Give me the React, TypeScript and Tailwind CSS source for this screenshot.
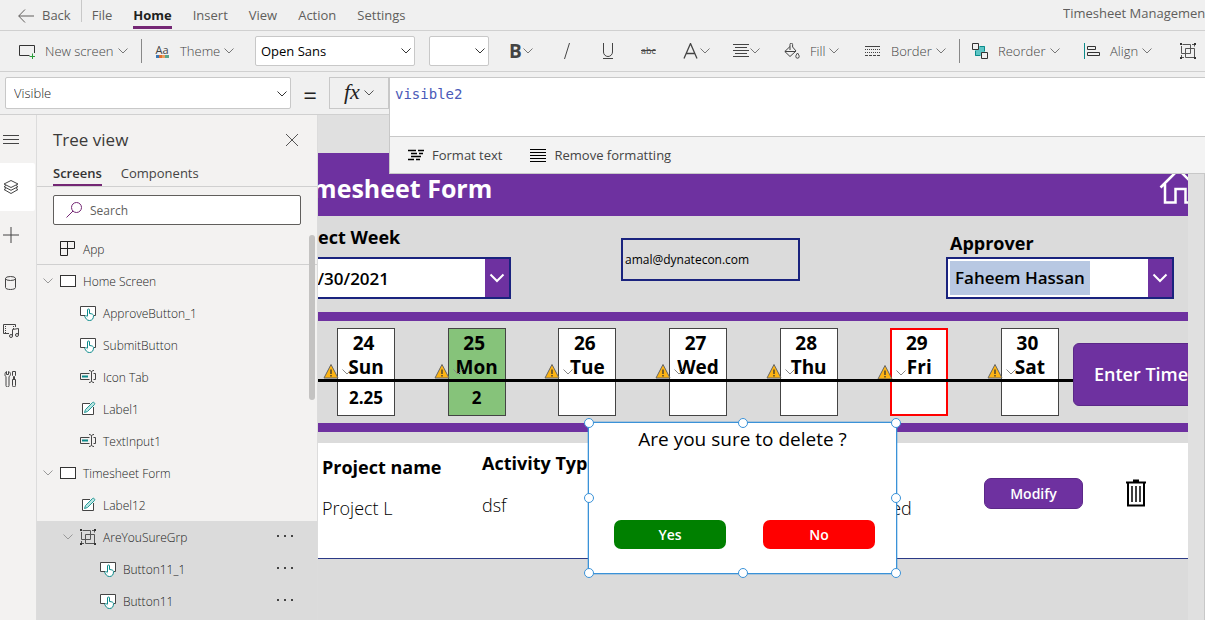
import { ReactNode, useState } from "react";
import clsx from "clsx";

interface TreeItem {
  name: string;
  icon: "screen" | "button" | "input" | "label" | "group";
  level: number;
  open?: boolean;
  selected?: boolean;
}

interface Day {
  date: string;
  name: string;
  hours: string;
  tone?: "green" | "red";
}

const menuTabs = ["File", "Home", "Insert", "View", "Action", "Settings"];

const treeItems: TreeItem[] = [
  { name: "Home Screen", icon: "screen", level: 0, open: true },
  { name: "ApproveButton_1", icon: "button", level: 1 },
  { name: "SubmitButton", icon: "button", level: 1 },
  { name: "Icon Tab", icon: "input", level: 1 },
  { name: "Label1", icon: "label", level: 1 },
  { name: "TextInput1", icon: "input", level: 1 },
  { name: "Timesheet Form", icon: "screen", level: 0, open: true },
  { name: "Label12", icon: "label", level: 1 },
  { name: "AreYouSureGrp", icon: "group", level: 1, open: true, selected: true },
  { name: "Button11_1", icon: "button", level: 2, selected: true },
  { name: "Button11", icon: "button", level: 2, selected: true },
];

const days: Day[] = [
  { date: "24", name: "Sun", hours: "2.25" },
  { date: "25", name: "Mon", hours: "2", tone: "green" },
  { date: "26", name: "Tue", hours: "" },
  { date: "27", name: "Wed", hours: "" },
  { date: "28", name: "Thu", hours: "" },
  { date: "29", name: "Fri", hours: "", tone: "red" },
  { date: "30", name: "Sat", hours: "" },
];

const handles = [
  "left-0 top-0",
  "left-1/2 top-0",
  "left-full top-0",
  "left-0 top-1/2",
  "left-full top-1/2",
  "left-0 top-full",
  "left-1/2 top-full",
  "left-full top-full",
];

function Svg({ children, className = "" }: { children: ReactNode; className?: string }) {
  return (
    <svg
      viewBox="0 0 16 16"
      fill="none"
      stroke="currentColor"
      strokeWidth="1"
      aria-hidden="true"
      className={clsx("size-4 shrink-0", className)}
    >
      {children}
    </svg>
  );
}

function Chevron({ className = "text-[#777]" }: { className?: string }) {
  return (
    <svg
      viewBox="0 0 10 6"
      fill="none"
      stroke="currentColor"
      aria-hidden="true"
      className={clsx("h-[6px] w-[10px] shrink-0", className)}
    >
      <path d="M0.5 0.5 5 5 9.5 0.5" />
    </svg>
  );
}

function GroupIcon() {
  return (
    <Svg className="text-[#555]">
      <path d="M2.5 1.5H10.5V10.5H1.5V3M5.5 5.5H14.5V14.5H5.5ZM12 1.5H14.5V3.5M1.5 12V14.5H4" />
      <path d="M0 0h2v2H0zM14 0h2v2h-2zM0 14h2v2H0zM14 14h2v2h-2z" fill="#333" stroke="none" />
    </Svg>
  );
}

function TreeIcon({ icon }: { icon: TreeItem["icon"] }) {
  switch (icon) {
    case "screen":
      return (
        <Svg className="text-[#333]">
          <rect x="0.5" y="2.5" width="15" height="11" fill="#fff" />
        </Svg>
      );
    case "button":
      return (
        <Svg className="text-[#444]">
          <path d="M5 10.5H0.5V1.5H15.5V10.5H14" fill="#fff" />
          <path
            d="M7.500 11V5a1 1 0 0 1 2 0V8.500c2.500.2 4 .8 4 2.200 0 3-1.300 4.800-4 4.800-2.800 0-3.500-2-4.800-4 .6-1.200 1.700-1 2.800.3"
            fill="#fff"
            stroke="#0b8a8a"
          />
        </Svg>
      );
    case "input":
      return (
        <Svg className="text-[#444]">
          <path d="M9.500 4.500H0.500V10.500H9.500M13.500 4.500H15.500V10.500H13.500" />
          <path d="M9 1.500C10.500 1.500 11.500 2 11.500 3.500V11.500C11.500 13 10.500 13.500 9 13.500M14 1.500C12.500 1.500 11.500 2 11.500 3.500V11.500C11.500 13 12.500 13.500 14 13.500" />
          <path d="M2 6.500h6v2H2z" fill="#0b8a8a" stroke="none" />
        </Svg>
      );
    case "label":
      return (
        <Svg className="text-[#444]">
          <path d="M10 2.500H2.500V13.500H13.500V6" fill="#fff" />
          <path d="M4.500 11.500 5.500 8.500 12.500 1.500C13.500.5 15.500 2.300 14.500 3.500L7.500 10.500Z" fill="#b8e4e2" stroke="#259a97" />
        </Svg>
      );
    case "group":
      return <GroupIcon />;
  }
}

function ToolButton({
  icon,
  label,
  text,
  className,
}: {
  icon: ReactNode;
  label: string;
  text?: string;
  className: string;
}) {
  return (
    <button aria-label={label} className={clsx("flex h-8 shrink-0 items-center", className)}>
      {icon}
      {text && <span className="ml-2.5 pt-0.5 whitespace-nowrap">{text}</span>}
      <Chevron className={clsx("text-[#777]", text ? "ml-1" : "ml-px")} />
    </button>
  );
}

function MenuBar() {
  return (
    <header className="flex h-[31px] shrink-0 items-center border-b border-[#d0d0d0] bg-[#f0f0f0] text-[13px] text-[#605e5c]">
      <button className="flex items-center pt-px pr-2.5 pl-[18px]">
        <Svg className="mr-2">
          <path d="M16 8H0.800M7 1.500.7 8 7 14.500" />
        </Svg>
        Back
      </button>
      <span className="mb-2 h-[22px] w-px bg-[#c8c8c8]" />
      <nav className="flex gap-[21px] pl-2.5">
        {menuTabs.map((tab) => (
          <button
            key={tab}
            className={clsx(
              "border-b-3 pt-[3px] leading-[22px]",
              tab === "Home" ? "border-[#742774] font-bold text-[#201f1e]" : "border-transparent"
            )}
          >
            {tab}
          </button>
        ))}
      </nav>
      <span className="mb-0.5 ml-auto w-[142px] overflow-hidden whitespace-nowrap">Timesheet Management</span>
    </header>
  );
}

function Toolbar() {
  return (
    <div className="flex h-[41px] shrink-0 items-center overflow-hidden border-b border-[#d0d0d0] bg-[#f0f0f0] pl-[19px] text-[13px] font-light text-[#444]">
      <ToolButton
        label="New screen"
        text="New screen"
        className="w-[122px]"
        icon={
          <Svg className="text-[#333]">
            <path d="M10.500 12.500H0.500V2.500H15.500V10" />
            <path d="M13.500 10.500v6M10.500 13.500h6" stroke="#2a9d3a" />
          </Svg>
        }
      />
      <span className="h-6 w-px bg-[#888]" />
      <ToolButton
        label="Theme"
        text="Theme"
        className="ml-3 w-[101px]"
        icon={
          <span className="flex w-4 flex-col items-center">
            <span className="text-[11px] leading-[9px] font-normal">Aa</span>
            <span className="mt-px flex">
              <i className="h-[3px] w-[3px] bg-[#3b78b5]" />
              <i className="h-[3px] w-[3px] bg-[#e07030]" />
              <i className="h-[3px] w-[3px] bg-[#e8a060]" />
              <i className="h-[3px] w-[4px] bg-[#5aa58c]" />
            </span>
          </span>
        }
      />
      <div className="relative">
        <select
          aria-label="Font"
          className="block h-[30px] w-[160px] appearance-none rounded-[2px] border border-[#c8c8c8] bg-white px-[5px] pt-0.5 text-[13px] font-normal text-black"
        >
          <option>Open Sans</option>
        </select>
        <Chevron className="pointer-events-none absolute top-3 right-1 text-[#333]" />
      </div>
      <div className="relative ml-3.5">
        <select
          aria-label="Font size"
          className="block h-[30px] w-[60px] appearance-none rounded-[2px] border border-[#c8c8c8] bg-white"
        >
          <option></option>
        </select>
        <Chevron className="pointer-events-none absolute top-3 right-1 text-[#333]" />
      </div>
      <ToolButton
        label="Font weight"
        className="ml-5 w-[51px]"
        icon={<span className="w-[13px] text-[19px] font-bold">B</span>}
      />
      <button aria-label="Italic" className="w-[28px]">
        <Svg className="text-[#444]">
          <path d="M9.500 0 4.500 16" />
        </Svg>
      </button>
      <button aria-label="Underline" className="ml-3 w-[41px]">
        <Svg className="text-[#444]">
          <path d="M3.500 0V9a4.500 4.500 0 0 0 9 0V0M3 15.500H13" />
        </Svg>
      </button>
      <button aria-label="Strikethrough" className="w-[42px] text-left text-[9px] font-normal line-through">
        abc
      </button>
      <ToolButton
        label="Font color"
        className="w-[50px]"
        icon={
          <Svg className="text-[#444]">
            <path d="M1 15.500 7.500.5 14 15.500M3.500 10.500h8.500" strokeWidth="1.300" />
          </Svg>
        }
      />
      <ToolButton
        label="Text alignment"
        className="w-[51px]"
        icon={
          <Svg className="text-[#444]">
            <path d="M0 1.500h16M2 4.500h12M0 7.500h16M2 10.500h12M0 13.500h16" />
          </Svg>
        }
      />
      <ToolButton
        label="Fill"
        text="Fill"
        className="w-[81px]"
        icon={
          <Svg className="text-[#444]">
            <path d="M6 7V1.500a1.300 1.300 0 0 1 2.600 0V4L12 8 6 13.500.800 8.500 6 3.500M1 8.500H11.500M13.500 10c1 1.500 1.700 2.500 1.700 3.500a1.700 1.700 0 0 1-3.400 0c0-1 .7-2 1.700-3.500Z" />
          </Svg>
        }
      />
      <ToolButton
        label="Border"
        text="Border"
        className="w-[94px]"
        icon={
          <Svg className="text-[#444]">
            <path d="M0 3.500h15" />
            <path d="M0 6.500h15M0 9.500h15" strokeDasharray="1 1" />
            <path d="M0 12.500h15" strokeDasharray="3 1" />
          </Svg>
        }
      />
      <span className="h-6 w-px bg-[#888]" />
      <ToolButton
        label="Reorder"
        text="Reorder"
        className="ml-3 w-[112px]"
        icon={
          <Svg className="text-[#333]">
            <path d="M3 3h10v10H3z" fill="#5cc5c5" stroke="none" />
            <path d="M8 3.500h4.500V8M3.500 8v4.500H8" stroke="#0b8a8a" />
            <path d="M.5.5h6v6h-6zM9.500 9.500h6v6h-6z" fill="#f0f0f0" />
          </Svg>
        }
      />
      <ToolButton
        label="Align"
        text="Align"
        className="w-[96px]"
        icon={
          <Svg className="text-[#333]">
            <path d="M.5 0v16" stroke="#0b8a8a" />
            <path d="M3.500 3.500h8v3h-8zM3.500 9.500h12v3h-12z" />
          </Svg>
        }
      />
      <button aria-label="Group">
        <GroupIcon />
      </button>
    </div>
  );
}

function FormulaBar() {
  const [formula, setFormula] = useState("visible2");

  return (
    <div className="relative z-20 flex h-[43px] shrink-0 items-center border-b border-[#d0d0d0] bg-[#f0f0f0] pl-[5px]">
      <div className="relative">
        <select
          aria-label="Property"
          className="block h-8 w-[286px] appearance-none rounded-[2px] border border-[#c8c8c8] bg-white px-2 pt-0.5 text-[13px] font-light text-[#222]"
        >
          <option>Visible</option>
        </select>
        <Chevron className="pointer-events-none absolute top-3.5 right-1 text-[#333]" />
      </div>
      <span className="mt-1 w-[38px] text-center text-[24px] text-[#222]">=</span>
      <button
        aria-label="Insert function"
        className="flex h-8 w-[60px] items-center border border-[#c8c8c8] pl-3.5 text-[#222]"
      >
        <span className="mr-1 pb-1 font-['Liberation_Serif',serif] text-[22px] italic">fx</span>
        <Chevron className="text-[#555]" />
      </button>

      {/* expanded editor hangs over the canvas */}
      <div className="absolute top-[5px] right-0 left-[389px] border border-r-0 border-[#c8c8c8] bg-[#f3f3f3]">
        <textarea
          aria-label="Formula"
          value={formula}
          onChange={(e) => setFormula(e.target.value)}
          spellCheck={false}
          className="block h-[58px] w-full resize-none bg-white px-[5px] py-1.5 font-['DejaVu_Sans_Mono',monospace] text-[14px] leading-5 text-[#4a5ab8] outline-none"
        />
        <div className="flex h-[37px] items-center gap-7 border-t border-[#c8c8c8] pt-0.5 pl-[18px] text-[13px] text-[#444]">
          <button className="flex items-center gap-2">
            <Svg className="text-black">
              <path d="M0 2.500h8M10 2.500h6M3 5.500h6M11 5.500h4M3 8.500h10M0 11.500h6M8 11.500h4" strokeWidth="1.300" />
            </Svg>
            Format text
          </button>
          <button className="flex items-center gap-2">
            <Svg className="text-black">
              <path d="M0 1.500h16M0 4.500h16M0 7.500h16M0 10.500h16M0 13.500h16" />
            </Svg>
            Remove formatting
          </button>
        </div>
      </div>
    </div>
  );
}

function Rail() {
  const item = "flex h-12 w-[35px] items-center pl-[3px] text-[#444]";

  return (
    <nav className="w-[37px] shrink-0 border-r border-[#dcdcdc] bg-[#f3f2f1]">
      <button aria-label="Menu" className={item}>
        <Svg>
          <path d="M0 4.500h16M0 8.500h16M0 12.500h16" />
        </Svg>
      </button>
      <button aria-label="Tree view" className={clsx(item, "rounded-r-[2px] bg-white")}>
        <Svg>
          <path d="M8 1.500 15 5 8 8.500 1 5ZM3 6.500 1 7.700 8 11.300 15 7.700 13 6.500M3 9.500 1 10.500 8 14.500 15 10.500 13 9.500" />
        </Svg>
      </button>
      <button aria-label="Insert" className={item}>
        <Svg>
          <path d="M8 0v16M0 8h16" />
        </Svg>
      </button>
      <button aria-label="Data" className={item}>
        <Svg>
          <ellipse cx="7.500" cy="3.500" rx="5" ry="2" />
          <path d="M2.500 3.500V12.500c0 1.200 2.200 2 5 2s5-.8 5-2V3.500" />
        </Svg>
      </button>
      <button aria-label="Media" className={item}>
        <Svg>
          <path d="M6 10.500H.5V1.500H12.500V4" />
          <path d="M2.500 3v7M10.500 3v3" strokeDasharray="1 1" />
          <path d="M9.500 13V6.500l6-1V12" />
          <circle cx="8" cy="13" r="1.500" />
          <circle cx="14" cy="12" r="1.500" />
        </Svg>
      </button>
      <button aria-label="Advanced tools" className={item}>
        <Svg>
          <path d="M3.500 0.500V3.500h2V.5C7 1 7.500 2 7.500 3.500 7.500 4.500 7 5 6 5.500V14.500a1.500 1.500 0 0 1-3 0V5.500C2 5 2 4.500 2 3.500 2 2 2.500 1 3.500.5ZM9.500.5h3v4l-1 1v3h-1v-3l-1-1ZM9.500 8.500h3v6a1.500 1.500 0 0 1-3 0Z" />
        </Svg>
      </button>
    </nav>
  );
}

function TreeRow({ item }: { item: TreeItem }) {
  return (
    <li
      className={clsx(
        "flex h-8 shrink-0 items-center pr-6 text-[12px] font-light text-[#222]",
        item.selected && "bg-[#dbdbdb]",
        item.level === 0 && "pl-1.5",
        item.level === 1 && "pl-[26px]",
        item.level === 2 && "pl-[46px]"
      )}
    >
      <span className="w-[17px]">{item.open && <Chevron className="text-[#999]" />}</span>
      <TreeIcon icon={item.icon} />
      <span className="ml-[7px] pt-0.5">{item.name}</span>
      {item.selected && (
        <button aria-label={`More actions for ${item.name}`} className="ml-auto">
          <Svg>
            <path d="M0 6h2v2H0zM7 6h2v2H7zM14 6h2v2h-2z" fill="#444" stroke="none" />
          </Svg>
        </button>
      )}
    </li>
  );
}

function TreeView() {
  return (
    <aside className="relative flex w-[281px] shrink-0 flex-col border-r border-[#dcdcdc] bg-[#f3f2f1]">
      <div className="flex h-12 shrink-0 items-center justify-between pt-0.5 pr-[17px] pl-4">
        <h2 className="text-[17px] font-medium text-[#3b3a39]">Tree view</h2>
        <button aria-label="Close" className="text-[#555]">
          <Svg>
            <path d="M2 2 14 14M14 2 2 14" />
          </Svg>
        </button>
      </div>
      <div className="flex h-6 shrink-0 items-end gap-[19px] border-b border-[#d0d0d0] pl-4 text-[13px] leading-[21px] text-[#444]">
        <button className="border-b-2 border-[#742774] font-semibold text-[#333]">Screens</button>
        <button className="border-b-2 border-transparent">Components</button>
      </div>
      <label className="mx-4 mt-2 flex h-[30px] shrink-0 items-center rounded-[2px] border border-[#605e5c] bg-white pl-3">
        <Svg className="text-[#742774]">
          <circle cx="10.500" cy="5.500" r="5" />
          <path d="M7 9 .5 15.500" />
        </Svg>
        <input
          type="text"
          aria-label="Search"
          placeholder="Search"
          className="ml-2 min-w-0 flex-1 pt-0.5 text-[12px] outline-none placeholder:text-[#605e5c]"
        />
      </label>
      <div className="mt-2 flex h-8 shrink-0 items-center border-b border-[#d0d0d0] pl-[23px] text-[12px] font-light text-[#222]">
        <Svg className="text-[#222]">
          <path d="M.5.5h14v7H.5zM7.500.5v14H.5v-14" />
        </Svg>
        <span className="ml-[7px] pt-0.5">App</span>
      </div>
      <ul className="flex min-h-0 flex-1 flex-col">
        {treeItems.map((item) => (
          <TreeRow key={item.name} item={item} />
        ))}
        <li aria-hidden="true" className="flex-1 bg-[#dbdbdb]" />
      </ul>
      <div className="absolute top-[120px] right-0.5 h-[165px] w-[6px] rounded-full bg-[#c4c3c2]" />
    </aside>
  );
}

function DayBox({ day }: { day: Day }) {
  return (
    <div
      className={clsx(
        "relative h-[88px] w-[58px] text-center text-[19px] leading-6 font-bold text-black",
        day.tone === "green" && "border border-[#444] bg-[#86c37a]",
        day.tone === "red" && "border-2 border-[#ff0000] bg-white",
        !day.tone && "border border-[#444] bg-white"
      )}
    >
      <p className={clsx("h-[51px]", day.tone === "red" ? "pt-px" : "pt-0.5")}>
        <span className="whitespace-pre">{day.date + " "}</span>
        <br />
        {day.name}
      </p>
      <p className="pt-1.5 text-[17px]">{day.hours}</p>
      <Chevron className="absolute top-10 left-1 text-[#888]" />
      <svg viewBox="0 0 16 16" className="absolute top-[34px] -left-[15px] size-4" aria-hidden="true">
        <path d="M8 1.500 15 15H1Z" fill="#fdb414" stroke="#666" />
        <path d="M8 6.500v4.500M8 12v1.500" stroke="#333" strokeWidth="1.300" />
      </svg>
    </div>
  );
}

function DeleteDialog() {
  return (
    <div
      role="dialog"
      aria-label="Are you sure to delete ?"
      className="absolute top-[269px] left-[270px] flex h-[152px] w-[309px] flex-col justify-between border border-[#3a92d8] bg-white px-[25px] pt-1 pb-6 text-black ring-1 ring-[#3a92d8]/30"
    >
      <p className="text-center text-[19px] leading-6">Are you sure to delete ?</p>
      <div className="flex justify-between text-[14px] font-semibold text-white">
        <button className="h-[29px] w-[112px] rounded-[7px] bg-[#008000]">Yes</button>
        <button className="mr-[-4px] h-[29px] w-[112px] rounded-[7px] bg-[#ff0000]">No</button>
      </div>
      {handles.map((place) => (
        <span
          key={place}
          className={clsx(
            "absolute size-[10px] -translate-x-1/2 -translate-y-1/2 rounded-full border border-[#3a92d8] bg-white",
            place
          )}
        />
      ))}
    </div>
  );
}

function ComboButton({ label }: { label: string }) {
  return (
    <button aria-label={label} className="flex w-6 shrink-0 items-center justify-center bg-[#6e31a0]">
      <svg viewBox="0 0 16 10" fill="none" stroke="#fff" strokeWidth="2" className="h-[10px] w-4" aria-hidden="true">
        <path d="M1.500 1.500 8 8 14.500 1.500" />
      </svg>
    </button>
  );
}

function Canvas() {
  return (
    <main className="min-w-0 flex-1 border-r border-[#c8c8c8] bg-[#e0e0e0] pt-[38px] pr-4">
      <div className="relative h-full overflow-hidden bg-[#dbdbdb] text-black">
        {/* the screen is wider than the viewport and bleeds off on both sides */}
        <div className="-mx-8">
          <div className="flex h-[63px] items-center justify-between bg-[#6e31a0] pt-2 pr-[21px] pl-1">
            <h1 className="text-[25px] font-bold text-white">Timesheet Form</h1>
            <svg viewBox="0 0 40 40" fill="none" stroke="#fff" strokeWidth="2.500" className="size-10" aria-hidden="true">
              <path d="M1.500 18.500 19.500.5 37.500 18.500M6 15V33.500H16.500V20H26.500V33.500H34V15" />
            </svg>
          </div>

          <div className="flex h-24 pr-[46px]">
            <div className="w-[225px] pt-[9px]">
              <label htmlFor="week" className="block pl-1.5 text-[18px] leading-6 font-bold">
                Select Week
              </label>
              <div className="mt-2 flex h-[42px] border-2 border-[#1a237e]">
                <input
                  id="week"
                  type="text"
                  defaultValue="10/30/2021"
                  className="min-w-0 flex-1 bg-white pt-0.5 pl-2.5 text-[17px] font-semibold outline-none"
                />
                <ComboButton label="Pick week" />
              </div>
            </div>
            <input
              type="text"
              aria-label="Email"
              defaultValue="amal@dynatecon.com"
              className="mt-[22px] ml-[110px] h-[43px] w-[179px] border-2 border-[#1a237e] px-0.5 text-[12px]"
            />
            <div className="ml-auto w-[228px] pt-[15px]">
              <label htmlFor="approver" className="block pl-1 text-[18px] leading-6 font-bold">
                Approver
              </label>
              <div className="mt-0.5 flex h-[42px] border-2 border-[#1a237e] bg-white">
                <button
                  id="approver"
                  className="m-0.5 mr-auto bg-[#b8c8e2] px-[5px] text-[17px] font-semibold whitespace-nowrap"
                >
                  Faheem Hassan
                </button>
                <ComboButton label="Pick approver" />
              </div>
            </div>
          </div>

          <div className="flex h-[120px] items-center border-y-9 border-[#6e31a0]">
            <div className="relative flex flex-1 justify-between pr-3.5 pb-px pl-[51px]">
              {days.map((day) => (
                <DayBox key={day.date} day={day} />
              ))}
              <span className="absolute top-[51px] right-0 left-0 h-[3px] bg-black" />
            </div>
            <button className="mt-1 h-[63px] w-[147px] rounded-[6px] border border-[#5b2888] bg-[#6e31a0] pl-5 text-left text-[18px] font-semibold text-white">
              Enter Time
            </button>
          </div>

          <div className="mt-[11px] flex h-[116px] border-b border-[#2c3a86] bg-white pr-[73px] pl-9 text-[18px] leading-6">
            <div className="w-40 pt-3">
              <p className="font-bold">Project name</p>
              <p className="pt-[17px] font-light">Project L</p>
            </div>
            <div className="w-40 pt-2">
              <p className="font-bold">Activity Type</p>
              <p className="pt-[18px] font-light">dsf</p>
            </div>
            <p className="ml-auto w-[156px] pt-[53px] font-light">Submitted</p>
            <button className="mt-[35px] h-[31px] w-[99px] rounded-[7px] border border-[#5b2888] bg-[#6e31a0] text-[14px] font-semibold text-white">
              Modify
            </button>
            <button aria-label="Delete" className="mt-[36px] ml-[42px] h-7">
              <svg viewBox="0 0 22 28" fill="none" stroke="#000" strokeWidth="2" className="h-7 w-[22px]" aria-hidden="true">
                <path d="M1 3.500h20M8 1.500h6M3 4V26.500H19V4" />
                <path d="M7 7V23M11 7V23M15 7V23" strokeWidth="1.500" />
              </svg>
            </button>
          </div>
        </div>
        <DeleteDialog />
      </div>
    </main>
  );
}

export default function App() {
  return (
    <div className="flex h-screen flex-col overflow-hidden bg-[#f0f0f0] font-['Open_Sans','Noto_Sans',sans-serif]">
      <MenuBar />
      <Toolbar />
      <FormulaBar />
      <div className="flex min-h-0 flex-1">
        <Rail />
        <TreeView />
        <Canvas />
      </div>
    </div>
  );
}
